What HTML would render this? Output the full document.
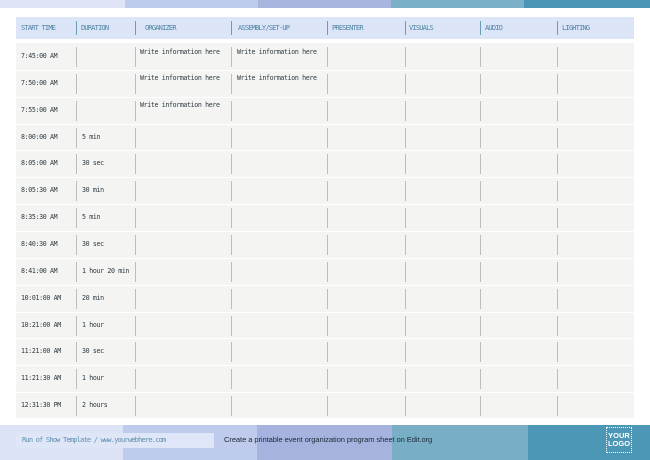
<!DOCTYPE html><html><head><style>
body{margin:0;width:650px;height:460px;background:#fff;position:relative;overflow:hidden;font-family:"DejaVu Sans Mono","Liberation Mono",monospace;}
.a{position:absolute}
.hd{font-size:7px;color:#4f86a4;top:24px;letter-spacing:-0.8px}
.t{font-size:6.6px;color:#2e3a40;letter-spacing:-0.35px}
.v{position:absolute;width:1px;background:#bdbdbd}
</style></head><body>
<div class="a" style="left:0;top:0;width:125px;height:8px;background:#dfe5f7"></div>
<div class="a" style="left:125px;top:0;width:133px;height:8px;background:#bfcbec"></div>
<div class="a" style="left:258px;top:0;width:133px;height:8px;background:#a8b5df"></div>
<div class="a" style="left:391px;top:0;width:133px;height:8px;background:#7ab0c8"></div>
<div class="a" style="left:524px;top:0;width:126px;height:8px;background:#4b96b6"></div>
<div class="a" style="left:16px;top:17px;width:618px;height:22px;background:#dce4f8"></div>
<div class="a hd" style="left:21px">START TIME</div>
<div class="a hd" style="left:81px">DURATION</div>
<div class="a hd" style="left:145px">ORGANIZER</div>
<div class="a hd" style="left:238px">ASSEMBLY/SET-UP</div>
<div class="a hd" style="left:332px">PRESENTER</div>
<div class="a hd" style="left:409px">VISUALS</div>
<div class="a hd" style="left:485px">AUDIO</div>
<div class="a hd" style="left:562px">LIGHTING</div>
<div class="v" style="left:76px;top:21px;height:14px;background:#6b9bb5"></div>
<div class="v" style="left:135px;top:21px;height:14px;background:#6b9bb5"></div>
<div class="v" style="left:231px;top:21px;height:14px;background:#6b9bb5"></div>
<div class="v" style="left:327px;top:21px;height:14px;background:#6b9bb5"></div>
<div class="v" style="left:405px;top:21px;height:14px;background:#6b9bb5"></div>
<div class="v" style="left:480px;top:21px;height:14px;background:#6b9bb5"></div>
<div class="v" style="left:557px;top:21px;height:14px;background:#6b9bb5"></div>
<div class="a" style="left:16px;top:43px;width:618px;height:375px;background:#f4f4f2"></div>
<div id="rows"></div>
<script>
var d=[["7:45:00 AM","","Write information here","Write information here"],["7:50:00 AM","","Write information here","Write information here"],["7:55:00 AM","","Write information here",""],["8:00:00 AM","5 min"],["8:05:00 AM","30 sec"],["8:05:30 AM","30 min"],["8:35:30 AM","5 min"],["8:40:30 AM","30 sec"],["8:41:00 AM","1 hour 20 min"],["10:01:00 AM","20 min"],["10:21:00 AM","1 hour"],["11:21:00 AM","30 sec"],["11:21:30 AM","1 hour"],["12:31:30 PM","2 hours"]];
var h="",cols=[76,135,231,327,405,480,557];
for(var i=0;i<14;i++){var y=43+i*26.85;
if(i>0)h+='<div class="a" style="left:16px;top:'+y.toFixed(1)+'px;width:618px;height:1px;background:#fff"></div>';
cols.forEach(function(c){h+='<div class="v" style="left:'+c+'px;top:'+(y+4).toFixed(1)+'px;height:20px"></div>'});
var r=d[i];var ty=(y+9).toFixed(1);
h+='<div class="a t" style="left:21px;top:'+ty+'px">'+r[0]+'</div>';
if(r[1])h+='<div class="a t" style="left:82px;top:'+ty+'px">'+r[1]+'</div>';
if(r[2])h+='<div class="a t" style="left:140px;top:'+(y+4.5).toFixed(1)+'px">'+r[2]+'</div>';
if(r[3])h+='<div class="a t" style="left:237px;top:'+(y+4.5).toFixed(1)+'px">'+r[3]+'</div>';}
document.getElementById("rows").innerHTML=h;
</script>
<div class="a" style="left:0;top:425px;width:123px;height:35px;background:#dce3f7"></div>
<div class="a" style="left:123px;top:425px;width:134px;height:35px;background:#bfcbec"></div>
<div class="a" style="left:257px;top:425px;width:135px;height:35px;background:#a6b3df"></div>
<div class="a" style="left:392px;top:425px;width:136px;height:35px;background:#78afc6"></div>
<div class="a" style="left:528px;top:425px;width:122px;height:35px;background:#4c96b6"></div>
<div class="a" style="left:16px;top:433px;width:198px;height:15px;background:#dfe6f8"></div>
<div class="a" style="left:22px;top:436px;font-size:7px;letter-spacing:-0.8px;color:#5f8fab">Run of Show Template / www.yourwebhere.com</div>
<div class="a" style="left:224px;top:435px;font-family:'Liberation Sans',sans-serif;font-size:7.6px;color:#1f2b3a;letter-spacing:-0.1px">Create a printable event organization program sheet on Edit.org</div>
<div class="a" style="left:606px;top:427px;width:26px;height:26px;border:1px dotted #fff;box-sizing:border-box;color:#fff;font-family:'Liberation Sans',sans-serif;font-weight:bold;font-size:7.5px;line-height:8px;text-align:center;padding-top:4px">YOUR<br>LOGO</div>
</body></html>
